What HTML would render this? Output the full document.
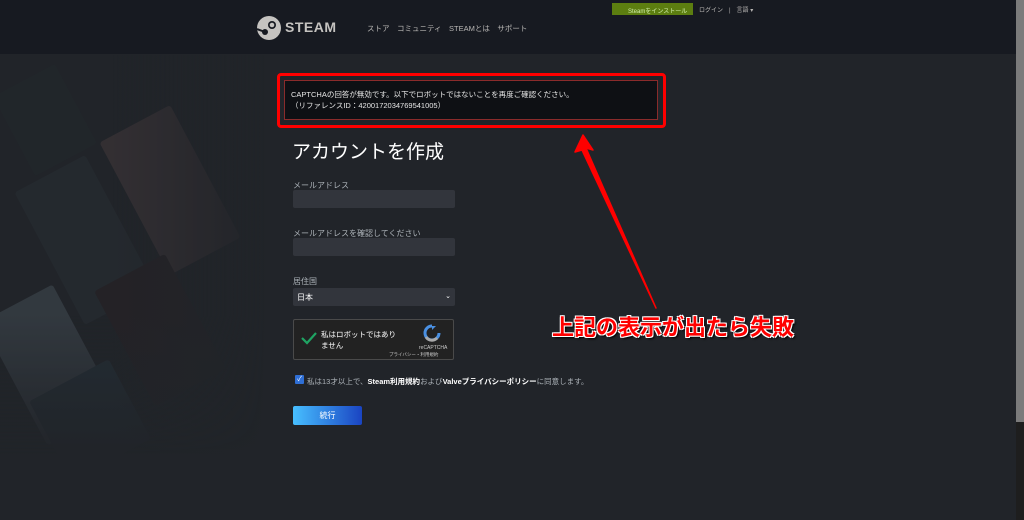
<!DOCTYPE html>
<html><head><meta charset="utf-8"><style>
*{margin:0;padding:0;box-sizing:border-box}
body{width:1024px;height:520px;overflow:hidden;background:#212429;font-family:"Liberation Sans","Noto Sans CJK JP",sans-serif;position:relative;color:#c6d4df}
.hdr{position:absolute;left:0;top:0;width:1016px;height:54px;background:#171a21}
.abs{position:absolute;white-space:nowrap}
.card{position:absolute;border-radius:3px}
.sb{position:absolute;left:1016px;top:0;width:8px;height:422px;background:#7b7b7b}
.sb2{position:absolute;left:1016px;top:422px;width:8px;height:98px;background:#1e1e1e}
.in{position:absolute;left:293px;width:162px;height:18px;background:#32353c;border-radius:2px}
.lbl{position:absolute;left:293px;font-size:8px;color:#acb2b8}
</style></head><body>
<div class="hdr"></div>
<div class="abs" style="left:0;top:55px;width:280px;height:400px;overflow:hidden;opacity:0.7">
 <div class="card" style="left:10px;top:240px;width:80px;height:140px;background:#3a4249;transform:rotate(-28deg)"></div>
 <div class="card" style="left:45px;top:110px;width:80px;height:150px;background:#262c31;transform:rotate(-28deg)"></div>
 <div class="card" style="left:130px;top:60px;width:80px;height:150px;background:#3b3437;transform:rotate(-28deg)"></div>
 <div class="card" style="left:10px;top:20px;width:70px;height:90px;background:#22272b;transform:rotate(-28deg)"></div>
 <div class="card" style="left:45px;top:320px;width:90px;height:90px;background:#25323a;transform:rotate(-28deg)"></div>
 <div class="card" style="left:120px;top:210px;width:80px;height:130px;background:#262226;transform:rotate(-28deg)"></div>
 <div class="abs" style="left:0;top:0;width:280px;height:400px;background:linear-gradient(to right,rgba(33,36,41,0) 40%,#212429 95%),linear-gradient(to bottom,rgba(33,36,41,0) 65%,#212429 100%)"></div>
</div>
<svg class="abs" style="left:257px;top:16px" width="24" height="24" viewBox="0 0 24 24"><circle cx="12" cy="12" r="12" fill="#c5c3c0"/><circle cx="15" cy="9" r="4" fill="#171a21"/><circle cx="15" cy="9" r="2.3" fill="#c5c3c0"/><circle cx="8" cy="16" r="3" fill="#171a21"/><path d="M0 13 L8 16" stroke="#171a21" stroke-width="2"/></svg>
<div class="abs" style="left:285px;top:19px;font-size:14px;font-weight:bold;color:#c5c3c0;letter-spacing:0.5px">STEAM</div>
<div class="abs" style="left:367px;top:23px;font-size:7.5px;color:#b8b6b4;word-spacing:3px">ストア　コミュニティ　STEAMとは　サポート</div>
<div class="abs" style="left:612px;top:3px;width:81px;height:12px;background:#5c7e10;font-size:6px;color:#d2efa9;padding:3px 0 0 16px;overflow:hidden">Steamをインストール</div>
<div class="abs" style="left:699px;top:5px;font-size:6px;color:#b8b6b4">ログイン　|　言語 ▾</div>
<div class="abs" style="left:277px;top:73px;width:389px;height:55px;border:3px solid #f00;border-radius:4px"></div>
<div class="abs" style="left:284px;top:80px;width:374px;height:40px;background:#0e1014;border:1px solid #8a2b2b;font-size:7.5px;color:#e6e6e6;padding:8px 0 0 6px;line-height:11px">CAPTCHAの回答が無効です。以下でロボットではないことを再度ご確認ください。<br>（リファレンスID：4200172034769541005）</div>
<div class="abs" style="left:292px;top:137px;font-size:19px;color:#fff">アカウントを作成</div>
<div class="lbl" style="top:180px">メールアドレス</div>
<div class="in" style="top:190px"></div>
<div class="lbl" style="top:228px">メールアドレスを確認してください</div>
<div class="in" style="top:238px"></div>
<div class="lbl" style="top:276px">居住国</div>
<div class="in" style="top:288px;font-size:8px;color:#fff;padding:4px 4px">日本<span style="float:right;font-size:7px">⌄</span></div>
<div class="abs" style="left:293px;top:319px;width:161px;height:41px;background:#222;border:1px solid #4a4a4a;border-radius:2px"></div>
<svg class="abs" style="left:300px;top:331px" width="18" height="14"><path d="M2 7 L7 12 L16 2" stroke="#1fa463" stroke-width="2.2" fill="none"/></svg>
<div class="abs" style="left:321px;top:329px;font-size:7.5px;color:#fff;line-height:11px">私はロボットではあり<br>ません</div>
<svg class="abs" style="left:423px;top:324px" width="18" height="18" viewBox="0 0 18 18"><path d="M9 2 A7 7 0 1 0 16 9" stroke="#4a90e2" stroke-width="3" fill="none"/><path d="M9 2 L13 2 L9 6Z" fill="#4a90e2"/><path d="M3 13 A7 7 0 0 0 14 14" stroke="#aaa" stroke-width="3" fill="none"/></svg>
<div class="abs" style="left:419px;top:345px;font-size:5px;color:#ccc">reCAPTCHA</div>
<div class="abs" style="left:389px;top:352px;font-size:4.5px;color:#ccc">プライバシー・利用規約</div>
<div class="abs" style="left:295px;top:375px;width:9px;height:9px;background:#2f6fd6;border-radius:1px;color:#fff;font-size:7px;line-height:9px;text-align:center">✓</div>
<div class="abs" style="left:307px;top:376px;font-size:7.5px;color:#acb2b8">私は13才以上で、<b style="color:#fff">Steam利用規約</b>および<b style="color:#fff">Valveプライバシーポリシー</b>に同意します。</div>
<div class="abs" style="left:293px;top:406px;width:69px;height:19px;background:linear-gradient(to right,#47bfff,#1a44c2);border-radius:2px;font-size:8px;color:#fff;text-align:center;line-height:19px">続行</div>
<svg class="abs" style="left:570px;top:130px" width="100" height="180"><path d="M13 5 L5 22 L12 20 L86 178 L16 18 L23 20Z" fill="#f00" stroke="#f00" stroke-width="1.5" stroke-linejoin="round"/></svg>
<div class="abs" style="left:552px;top:310px;font-size:22px;font-weight:bold;color:#f00;text-shadow:-1px -1px 0 #fff,1px -1px 0 #fff,-1px 1px 0 #fff,1px 1px 0 #fff,2px 2px 2px #000">上記の表示が出たら失敗</div>
<div class="sb"></div><div class="sb2"></div>
</body></html>
